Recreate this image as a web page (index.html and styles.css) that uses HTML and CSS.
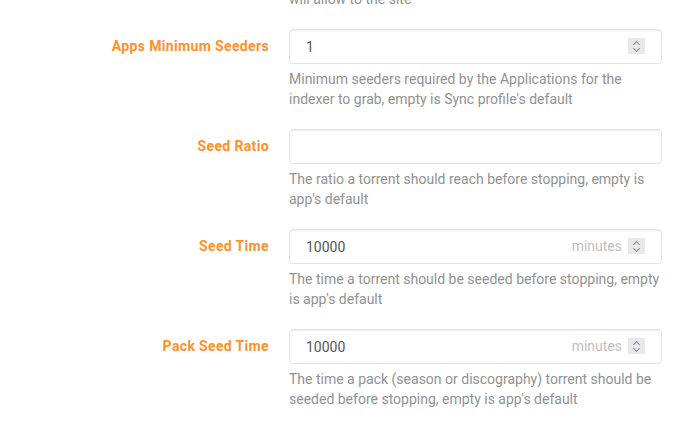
FILE: index.html
```html
<!DOCTYPE html>
<html lang="en">
<head>
  <meta charset="UTF-8">
  <title>Indexer Settings</title>
  <link rel="stylesheet" href="styles.css">
</head>
<body>

  <div class="form">
    <div class="group group-cut">
      <div class="label"></div>
      <div class="field">
        <div class="help">will allow to the site</div>
      </div>
    </div>

    <div class="group">
      <label class="label">Apps Minimum Seeders</label>
      <div class="field">
        <div class="input-wrap">
          <input type="text" class="input" value="1">
          <span class="stepper"><i class="up"></i><i class="down"></i></span>
        </div>
        <div class="help">Minimum seeders required by the Applications for the indexer to grab, empty is Sync profile's default</div>
      </div>
    </div>

    <div class="group">
      <label class="label">Seed Ratio</label>
      <div class="field">
        <div class="input-wrap">
          <input type="text" class="input" value="">
        </div>
        <div class="help">The ratio a torrent should reach before stopping, empty is app's default</div>
      </div>
    </div>

    <div class="group">
      <label class="label">Seed Time</label>
      <div class="field">
        <div class="input-wrap">
          <input type="text" class="input" value="10000">
          <span class="unit">minutes</span>
          <span class="stepper"><i class="up"></i><i class="down"></i></span>
        </div>
        <div class="help">The time a torrent should be seeded before stopping, empty is app's default</div>
      </div>
    </div>

    <div class="group">
      <label class="label">Pack Seed Time</label>
      <div class="field">
        <div class="input-wrap">
          <input type="text" class="input" value="10000">
          <span class="unit">minutes</span>
          <span class="stepper"><i class="up"></i><i class="down"></i></span>
        </div>
        <div class="help">The time a pack (season or discography) torrent should be seeded before stopping, empty is app's default</div>
      </div>
    </div>
  </div>

</body>
</html>
```

FILE: styles.css
```css
body {
  margin: 0;
  background: #fff;
  font-family: Roboto, "Liberation Sans", sans-serif;
  font-size: 14px;
  color: #515253;
  overflow: hidden;
}
.form {
  padding: 0 19px;
}
.group {
  display: flex;
  margin-bottom: 20px;
}
.group-cut {
  margin-top: -16px;
}
.label {
  flex: 0 0 250px;
  margin-right: 20px;
  text-align: right;
  font-weight: bold;
  letter-spacing: 0.35px;
  line-height: 35px;
  color: #ff902b;
}
.field {
  flex: 1;
}
.input-wrap {
  position: relative;
}
.input {
  display: block;
  box-sizing: border-box;
  width: 100%;
  height: 35px;
  padding: 6px 16px;
  border: 1px solid #dde6e9;
  border-radius: 4px;
  box-shadow: inset 0 1px 1px rgba(0, 0, 0, 0.075);
  font-family: inherit;
  font-size: 14px;
  color: #555;
  outline: none;
}
.unit {
  position: absolute;
  right: 40px;
  top: 0;
  line-height: 35px;
  color: #c1c1c1;
}
/* fake spin buttons */
.stepper {
  position: absolute;
  right: 17px;
  top: 9px;
  width: 17px;
  height: 16px;
  background: #e8e8ec;
}
.stepper i {
  position: absolute;
  left: 6px;
  width: 4px;
  height: 4px;
  border-left: 1px solid #8a8a8f;
  border-top: 1px solid #8a8a8f;
}
.stepper .up {
  top: 4px;
  transform: rotate(45deg);
}
.stepper .down {
  top: 8px;
  transform: rotate(225deg);
}
.help {
  margin-top: 5px;
  line-height: 20px;
  color: #909293;
}
```
